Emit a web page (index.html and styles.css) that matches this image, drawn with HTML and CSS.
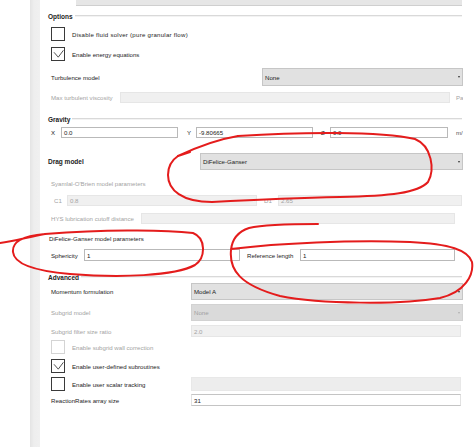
FILE: index.html
```html
<!DOCTYPE html>
<html>
<head>
<meta charset="utf-8">
<link rel="stylesheet" href="styles.css">
</head>
<body>
<div class="app">
  <div class="gutter"></div>
  <div class="strip"></div>
  <div class="panel">
    <div class="topbox"></div>

    <div class="gtitle m4"><span>Options</span><div class="rule"></div></div>
    <div class="row cbrow m5"><span class="cb"></span><span class="cblbl wide">Disable fluid solver (pure granular flow)</span></div>
    <div class="row cbrow m6"><span class="cb"><svg class="tick" viewBox="0 0 14 14"><polyline points="2.3,5 7.3,10.7 13.3,2.7"/></svg></span><span class="cblbl">Enable energy equations</span></div>
    <div class="row h18 m7"><span class="lbl w-turb">Turbulence model</span><div class="combo w-c201"><span>None</span><i class="arr"></i></div></div>
    <div class="row h11 m6 dis"><span class="lbl w-visc">Max turbulent viscosity</span><div class="inp off w-330"></div><span class="unit">Pa</span></div>

    <div class="gtitle m10"><span>Gravity</span><div class="rule"></div></div>
    <div class="row h11 m2"><span class="lbl w-x">X</span><div class="inp w-117">0.0</div><span class="lbl w-y">Y</span><div class="inp w-117">-9.80665</div><span class="lbl w-z">Z</span><div class="inp w-118">0.0</div><span class="unit u-grav">m/</span></div>

    <div class="row title-row h17 m15"><span class="btxt w-drag">Drag model</span><div class="combo w-c263"><span>DiFelice-Ganser</span><i class="arr"></i></div></div>
    <div class="row h12 m7 dis"><span class="lbl">Syamlal-O'Brien model parameters</span></div>
    <div class="row h11 m6 dis"><span class="lbl w-c1">C1</span><div class="inp off w-190">0.8</div><span class="lbl w-d1">D1</span><div class="inp off w-184">2.65</div></div>
    <div class="row h11 m7 dis"><span class="lbl w-hys">HYS lubrication cutoff distance</span><div class="inp off w-314"></div></div>
    <div class="row h12 m8"><span class="lbl sub">DiFelice-Ganser model parameters</span></div>
    <div class="row h12 m5"><span class="lbl w-sph">Sphericity</span><div class="inp w-156">1</div><span class="lbl w-ref">Reference length</span><div class="inp w-155">1</div></div>

    <div class="gtitle m10"><span>Advanced</span><div class="rule"></div></div>
    <div class="row h17"><span class="lbl w-adv">Momentum formulation</span><div class="combo w-c272"><span>Model A</span><i class="arr"></i></div></div>
    <div class="row h17 m4 dis"><span class="lbl w-adv">Subgrid model</span><div class="combo off w-c272"><span>None</span><i class="arr"></i></div></div>
    <div class="row h12 m4 dis"><span class="lbl w-adv">Subgrid filter size ratio</span><div class="inp off w-270">2.0</div></div>
    <div class="row cbrow m3 dis"><span class="cb"></span><span class="cblbl">Enable subgrid wall correction</span></div>
    <div class="row cbrow m5"><span class="cb"><svg class="tick" viewBox="0 0 14 14"><polyline points="2.3,5 7.3,10.7 13.3,2.7"/></svg></span><span class="cblbl">Enable user-defined subroutines</span></div>
    <div class="row cbrow m4"><span class="cb"></span><span class="cblbl w-scal">Enable user scalar tracking</span><div class="inp off2 w-270"></div></div>
    <div class="row h12 m3"><span class="lbl w-adv">ReactionRates array size</span><div class="inp rr w-270">31</div></div>
  </div>
</div>

<svg class="ink" viewBox="0 0 474 447" width="474" height="447">
  <path d="M238 136 C 214 140, 195 148, 178 156 L 190 152"/>
  <path d="M238 136 C 300 132, 380 131, 415 139 C 432 146, 435 170, 428 182 C 418 193, 390 196, 340 197 C 290 198, 250 200, 212 202 C 182 202, 168 190, 168 175 C 168 165, 172 160, 178 156"/>
  <path d="M0 243 C 15 241, 28 237, 45 234 C 100 230, 160 229, 193 233 C 206 238, 206 258, 195 265 C 175 276, 120 278, 70 274 C 35 271, 14 264, 13 252 C 12 242, 22 236, 45 234"/>
  <path d="M318 224 C 290 224, 262 225, 249 228 C 237 232, 232 240, 231 250 C 229 270, 240 285, 280 296 C 320 304, 400 305, 440 298 C 465 292, 474 275, 472 262 C 468 250, 450 244, 410 242 C 350 240, 280 243, 231 249"/>
</svg>
</body>
</html>
```

FILE: styles.css
```css
html, body {
  margin: 0;
  padding: 0;
  background: #ffffff;
}
body {
  width: 474px;
  height: 447px;
  overflow: hidden;
  position: relative;
  font-family: "Liberation Sans", Arial, sans-serif;
  font-size: 6.1px;
  color: #1c1c1c;
}
.app {
  display: flex;
  height: 447px;
}
.gutter {
  width: 30px;
  flex: none;
  background: #fff;
}
.strip {
  width: 10px;
  flex: none;
  background: linear-gradient(to right, #e4e4e4, #eeeeee 40%, #f0f0f0);
}
.panel {
  width: 415px;
  flex: none;
  padding-left: 8px;
  display: flex;
  flex-direction: column;
  overflow: hidden;
  background: #fff;
}
.topbox {
  margin-left: 28px;
  width: 386px;
  height: 5px;
  flex: none;
  background: #e6e6e6;
  border-bottom: 1px solid #cfcfcf;
}
.gtitle {
  display: flex;
  align-items: center;
  height: 12px;
  flex: none;
  font-weight: bold;
  font-size: 6.5px;
  color: #222;
}
.gtitle .rule {
  flex: 1;
  height: 0;
  margin-left: 2px;
  margin-right: 1px;
  border-top: 1px solid #d9d9d9;
  border-bottom: 1px solid #f3f3f3;
}
.row {
  display: flex;
  align-items: center;
  flex: none;
  padding-left: 3px;
  white-space: nowrap;
}
.title-row { padding-left: 0; }
.cbrow { height: 14px; }
.h11 { height: 11px; }
.h12 { height: 12px; }
.h17 { height: 17px; }
.h18 { height: 18px; }
.m2 { margin-top: 2px; }
.m3 { margin-top: 3px; }
.m4 { margin-top: 4px; }
.m5 { margin-top: 5px; }
.m6 { margin-top: 6px; }
.m7 { margin-top: 7px; }
.m8 { margin-top: 8px; }
.m10 { margin-top: 10px; }
.m15 { margin-top: 15px; }

.dis .lbl, .dis .cblbl, .dis .unit { color: #a3a3a3; }
.lbl { flex: none; }
.btxt {
  flex: none;
  font-weight: bold;
  font-size: 6.5px;
}
.sub { margin-left: -2px; }

.cb {
  width: 12px;
  height: 12px;
  flex: none;
  border: 1px solid #3a3a3a;
  background: #fff;
  display: block;
}
.dis .cb { border-color: #d4d4d4; }
.tick {
  display: block;
  width: 12px;
  height: 12px;
  margin: 0;
}
.tick polyline {
  fill: none;
  stroke: #333;
  stroke-width: 1;
}
.cblbl {
  margin-left: 7px;
  flex: none;
}
.cblbl.wide { letter-spacing: 0.25px; }

.inp {
  flex: none;
  box-sizing: border-box;
  height: 100%;
  background: #fff;
  border: 1px solid #b9b9b9;
  padding-left: 2px;
  display: flex;
  align-items: center;
  color: #222;
}
.inp.off {
  background: #f0f0f0;
  border-color: #e6e6e6;
  color: #a3a3a3;
}
.inp.off2 {
  background: #ededed;
  border-color: #e8e8e8;
}
.inp.rr {
  border-color: #c4c4c4;
  border-left-color: #e2e2e2;
  border-right-color: #e2e2e2;
}
.combo {
  flex: none;
  box-sizing: border-box;
  height: 100%;
  background: #e1e1e1;
  border: 1px solid #c6c6c6;
  padding-left: 2px;
  padding-right: 2px;
  display: flex;
  align-items: center;
  justify-content: space-between;
  color: #222;
}
.combo.off {
  background: #dadada;
  border-color: #d2d2d2;
  color: #a0a0a0;
}
.arr {
  width: 0;
  height: 0;
  border-left: 1.5px solid transparent;
  border-right: 1.5px solid transparent;
  border-top: 2px solid #333;
}
.combo.off .arr { border-top-color: #b0b0b0; }
.unit {
  flex: none;
  margin-left: 6px;
  color: #555;
}
.u-grav { margin-left: 8px; }

/* label widths (positions of fields) */
.w-turb { width: 211px; }
.w-visc { width: 69px; }
.w-x { width: 10px; }
.w-y { width: 9px; margin-left: 9px; }
.w-z { width: 9px; margin-left: 8px; }
.w-drag { width: 152px; }
.w-c1 { width: 13px; padding-left: 3px; }
.w-d1 { width: 14px; margin-left: 7px; }
.w-hys { width: 90px; }
.w-sph { width: 33px; }
.w-ref { width: 53px; margin-left: 7px; }
.w-adv { width: 140px; }
.w-scal { width: 119px; }

/* field widths */
.w-c201 { width: 201px; }
.w-c263 { width: 263px; }
.w-c272 { width: 272px; }
.w-330 { width: 330px; }
.w-117 { width: 117px; }
.w-118 { width: 118px; }
.w-190 { width: 190px; }
.w-184 { width: 184px; }
.w-314 { width: 314px; }
.w-156 { width: 156px; }
.w-155 { width: 155px; }
.w-270 { width: 270px; }

.ink {
  position: absolute;
  left: 0;
  top: 0;
  pointer-events: none;
}
.ink path {
  fill: none;
  stroke: #e41c1c;
  stroke-width: 2;
  stroke-linecap: round;
  stroke-linejoin: round;
}
```
